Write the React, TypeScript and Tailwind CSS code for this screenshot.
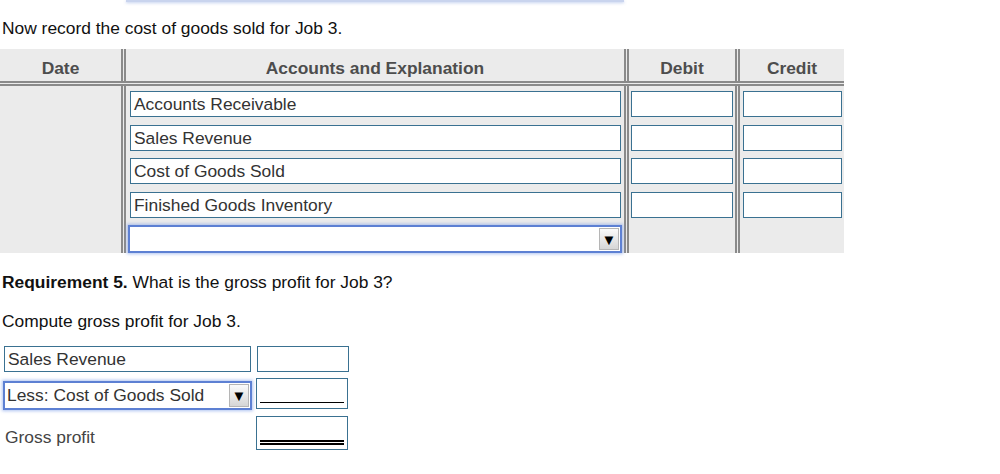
import React from "react"

const font = { fontFamily: '"Liberation Sans", Arial, Helvetica, sans-serif' }

function TextBox({ value, className }: { value?: string; className: string }) {
  return (
    <div className={`h-[26px] border border-[#3a7191] bg-white px-[3px] text-[17.4px] leading-[24px] text-[#333] ${className}`}>
      {value}
    </div>
  )
}

function SelectBox({ value, className }: { value?: string; className: string }) {
  return (
    <div
      className={`flex h-[29px] items-stretch border-2 border-[#5d80d3] bg-white shadow-[0_0_3px_1px_rgba(110,145,230,0.55)] ${className}`}
    >
      <div className="flex-1 truncate px-[2px] text-[17.4px] leading-[25px] text-[#333]">{value}</div>
      <div className="my-[1px] mr-[1px] flex w-[20px] items-center justify-center border border-[#b5b5b5] bg-gradient-to-b from-[#fbfbfb] to-[#d6d6d6] text-[15px] leading-none text-black">
        ▼
      </div>
    </div>
  )
}

export default function App() {
  const accounts = ["Accounts Receivable", "Sales Revenue", "Cost of Goods Sold", "Finished Goods Inventory"]

  return (
    <div className="h-[474px] w-[1000px] overflow-hidden bg-white text-[17.4px] text-[#111]" style={font}>
      <div className="ml-[126px] h-[2px] w-[498px] bg-[#c9d4ee] shadow-[0_1px_3px_rgba(120,150,220,0.5)]" />

      <p className="mt-[16px] pl-[2px] leading-[20px]">Now record the cost of goods sold for Job 3.</p>

      {/* journal table */}
      <div className="mt-[11px] w-[844px] bg-[#ebebeb]">
        <div className="flex h-[37px] border-b-[5px] border-double border-[#8a8a8a] font-bold text-[#4d4d4d]">
          <div className="w-[126px] border-r-[5px] border-double border-[#8a8a8a] pt-[9px] text-center leading-[20px]">Date</div>
          <div className="w-[503px] border-r-[5px] border-double border-[#8a8a8a] pt-[9px] text-center leading-[20px]">
            Accounts and Explanation
          </div>
          <div className="w-[111px] border-r-[5px] border-double border-[#8a8a8a] pt-[9px] text-center leading-[20px]">Debit</div>
          <div className="w-[104px] pt-[9px] text-center leading-[20px]">Credit</div>
        </div>

        <div className="flex h-[167px]">
          <div className="w-[126px] border-r-[5px] border-double border-[#8a8a8a]" />
          <div className="flex w-[503px] flex-col gap-[7.5px] border-r-[5px] border-double border-[#8a8a8a] pt-[5px]">
            {accounts.map((a) => (
              <TextBox key={a} value={a} className="ml-[4px] w-[491px]" />
            ))}
            <SelectBox className="ml-[2px] w-[494px]" />
          </div>
          <div className="flex w-[111px] flex-col gap-[7.5px] border-r-[5px] border-double border-[#8a8a8a] pt-[5px]">
            {accounts.map((a) => (
              <TextBox key={a} className="ml-[2px] w-[102px]" />
            ))}
          </div>
          <div className="flex w-[104px] flex-col gap-[7.5px] pt-[5px]">
            {accounts.map((a) => (
              <TextBox key={a} className="ml-[3px] w-[99px]" />
            ))}
          </div>
        </div>
      </div>

      <p className="mt-[19px] pl-[2px] leading-[20px]">
        <span className="font-bold">Requirement 5.</span> What is the gross profit for Job 3?
      </p>
      <p className="mt-[19px] pl-[2px] leading-[20px]">Compute gross profit for Job 3.</p>

      {/* gross profit computation */}
      <div className="mt-[15px] flex flex-col gap-[6px] pl-[3px]">
        <div className="flex items-end gap-[5px]">
          <TextBox value="Sales Revenue" className="ml-[1px] w-[247px]" />
          <TextBox className="ml-[1px] w-[92px]" />
        </div>
        <div className="flex items-start gap-[4px]">
          <SelectBox value="Less: Cost of Goods Sold" className="mt-[3px] w-[249px]" />
          <div className="flex h-[31px] w-[92px] items-end border border-[#3a7191] bg-white px-[3px] pb-[5px]">
            <div className="h-[1.5px] w-full bg-black" />
          </div>
        </div>
        <div className="flex items-end gap-[5px]">
          <div className="w-[248px] pb-[3px] pl-[2px] leading-[20px] text-[#444]">Gross profit</div>
          <div className="flex h-[34px] w-[92px] items-end border border-[#3a7191] bg-white px-[3px] pb-[4px]">
            <div className="h-[5px] w-full border-y-2 border-black" />
          </div>
        </div>
      </div>
    </div>
  )
}
